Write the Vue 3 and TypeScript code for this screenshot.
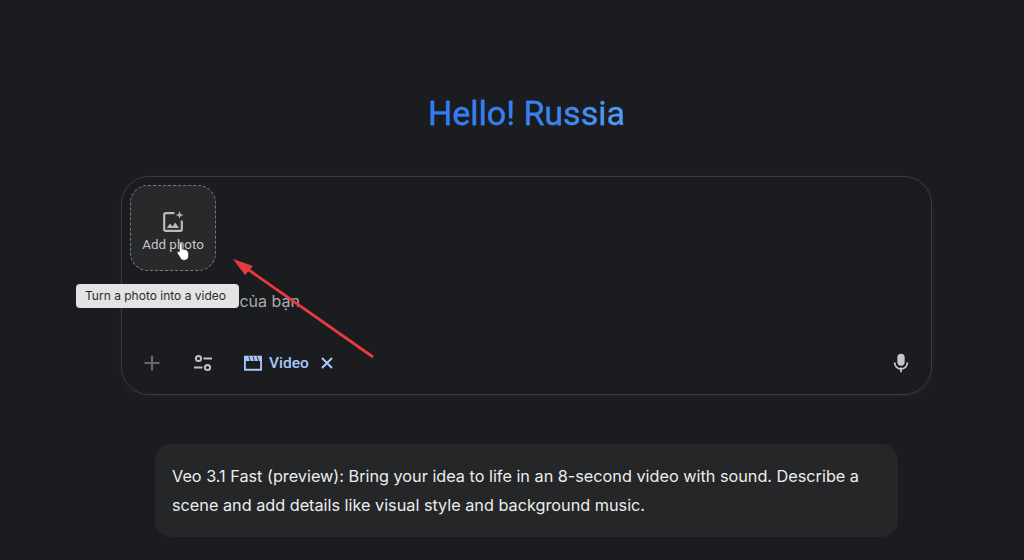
<template>
  <div class="page">
    <h1 class="title">Hello! Russia</h1>

    <div class="composer">
      <button class="add-photo">
        <svg class="photo-icon" viewBox="0 0 24 24" width="24" height="24">
          <path d="M13.500 3.200H4.600a1.400 1.400 0 0 0-1.400 1.400v14.800a1.400 1.400 0 0 0 1.400 1.400h14.800a1.400 1.400 0 0 0 1.400-1.400V10.500" fill="none" stroke="currentColor" stroke-width="2.200" />
          <path d="M5.800 18l3.200-4.600 2.500 3 2.700-4 3.900 5.600z" fill="currentColor" />
          <path d="M18.600 1l1 2.900 2.900 1-2.900 1-1 2.900-1-2.900-2.900-1 2.900-1z" fill="currentColor" />
        </svg>
        <span>Add photo</span>
      </button>

      <div class="tooltip">Turn a photo into a video</div>

      <div class="placeholder">Mô tả video của bạn</div>

      <div class="toolbar">
        <svg class="plus" viewBox="0 0 24 24" width="24" height="24">
          <path d="M12 4.500v15M4.500 12h15" stroke="currentColor" stroke-width="2.200" fill="none" />
        </svg>
        <svg class="tune" viewBox="0 0 24 24" width="24" height="24">
          <circle cx="7.500" cy="7.500" r="2.600" fill="none" stroke="currentColor" stroke-width="2" />
          <path d="M12.500 7.500H21M3 16.500h8.500" stroke="currentColor" stroke-width="2" fill="none" />
          <circle cx="16.500" cy="16.500" r="2.600" fill="none" stroke="currentColor" stroke-width="2" />
        </svg>
        <div class="chip">
          <svg viewBox="0 0 24 24" width="22" height="22">
            <path d="M3.200 5h17.600v14.400H3.200z" fill="none" stroke="currentColor" stroke-width="2" />
            <path d="M3.200 5h17.600v4.800H3.200z" fill="currentColor" />
            <path d="M7.500 5l1.600 4.800M12 5l1.600 4.800M16.500 5l1.600 4.800" stroke="#1b1c1f" stroke-width="1" fill="none" />
          </svg>
          <span class="chip-label">Video</span>
          <svg class="chip-x" viewBox="0 0 24 24" width="16" height="16">
            <path d="M4.500 4.500l15 15M19.500 4.500l-15 15" stroke="currentColor" stroke-width="3" fill="none" />
          </svg>
        </div>
        <svg class="mic" viewBox="0 0 24 24" width="22" height="22">
          <rect x="8" y="2" width="8" height="13" rx="4" fill="currentColor" />
          <path d="M5 11.500a7 7 0 0 0 14 0" stroke="currentColor" stroke-width="2" fill="none" />
          <path d="M12 17v5" stroke="currentColor" stroke-width="2" fill="none" />
        </svg>
      </div>
    </div>

    <div class="info">
      Veo 3.1 Fast (preview): Bring your idea to life in an 8-second video with sound. Describe a<br />
      scene and add details like visual style and background music.
    </div>

    <!-- annotation drawn on top of the screenshot -->
    <svg class="arrow" viewBox="0 0 1024 560" width="1024" height="560">
      <path d="M373 357L246 268" stroke="#e93b3f" stroke-width="2.800" fill="none" />
      <path d="M233 259l20 7-8 9z" fill="#e93b3f" />
    </svg>

    <svg class="hand" viewBox="0 0 16 22" width="15" height="20">
      <path
        d="M5 1c.9 0 1.500.6 1.500 1.500V8c.6-.5 1.700-.4 2 .3.600-.4 1.600-.2 1.900.5.600-.3 1.500 0 1.800.7l.8 1.500c.5 1 .5 1.800.5 2.800v1.700c0 2.600-1.700 4.500-4.300 4.500H8c-1.400 0-2.500-.7-3.300-2L1.300 12.300c-.5-.8 0-1.800.9-1.800.5 0 1 .2 1.300.6V2.500C3.500 1.600 4.100 1 5 1z"
        fill="#fff"
        stroke="#333"
        stroke-width=".7"
      />
    </svg>
  </div>
</template>

<script setup lang="ts">
</script>

<style>
html,
body {
  margin: 0;
  background: #1b1c1f;
}
</style>

<style scoped>
.page {
  position: relative;
  width: 1024px;
  height: 560px;
  overflow: hidden;
  box-sizing: border-box;
  padding-top: 94px;
  background: #1b1c1f;
  font-family: Inter, Roboto, "Liberation Sans", sans-serif;
  display: flex;
  flex-direction: column;
}

.title {
  margin: 0 0 0 428px;
  width: 198px;
  font-family: Roboto, sans-serif;
  font-size: 34px;
  line-height: 38px;
  font-weight: 400;
  -webkit-text-stroke: 0.3px #3b82f0;
  white-space: nowrap;
  background: linear-gradient(90deg, #2f7bf2 0%, #3b82f0 65%, #56a4f0 100%);
  -webkit-background-clip: text;
  background-clip: text;
  color: transparent;
}

.composer {
  position: relative;
  box-sizing: border-box;
  width: 811px;
  height: 219px;
  margin: 44px 0 0 121px;
  padding: 8px;
  border: 1px solid #3c3d40;
  border-radius: 28px;
  box-shadow: 0 2px 10px rgba(255, 255, 255, 0.03);
  display: flex;
  flex-direction: column;
}

.add-photo {
  box-sizing: border-box;
  width: 86px;
  height: 86px;
  padding: 5px 0 0;
  background: #28292b;
  border: 1px dashed #77787a;
  border-radius: 18px;
  color: #c4c6c8;
  font-family: Roboto, sans-serif;
  font-size: 13.4px;
  display: flex;
  flex-direction: column;
  align-items: center;
  justify-content: center;
  gap: 3px;
}

.photo-icon {
  color: #b8babb;
}

.tooltip {
  position: absolute;
  left: -46px;
  top: 107px;
  width: 163px;
  box-sizing: border-box;
  height: 24px;
  line-height: 24px;
  padding: 0 9px;
  border-radius: 4px;
  background: #e3e3e3;
  color: #2a2b2d;
  font-size: 12px;
  white-space: nowrap;
}

.placeholder {
  margin: 20px 0 0 16px;
  font-size: 16px;
  line-height: 20px;
  color: #a9abad;
  white-space: nowrap;
}

.toolbar {
  margin-top: auto;
  height: 24px;
  padding: 0 11px 11px 10px;
  display: flex;
  align-items: center;
}

.plus {
  color: #66686a;
}

.tune {
  margin-left: 27px;
  color: #c0c2c4;
}

.chip {
  margin-left: 27px;
  display: flex;
  align-items: center;
  color: #a8c7fa;
}

.chip-label {
  margin-left: 5px;
  font-family: Roboto, sans-serif;
  font-size: 15.5px;
  font-weight: 500;
}

.chip-x {
  margin-left: 10px;
}

.mic {
  margin-left: auto;
  color: #c4c6c8;
}

.info {
  box-sizing: border-box;
  width: 743px;
  height: 93px;
  margin: 49px 0 0 155px;
  padding: 18px 17px;
  border-radius: 16px;
  background: #252628;
  color: #eceded;
  font-size: 16.24px;
  line-height: 29px;
  white-space: nowrap;
}

.arrow {
  position: absolute;
  left: 0;
  top: 0;
  pointer-events: none;
}

.hand {
  position: absolute;
  left: 176px;
  top: 242px;
}
</style>
